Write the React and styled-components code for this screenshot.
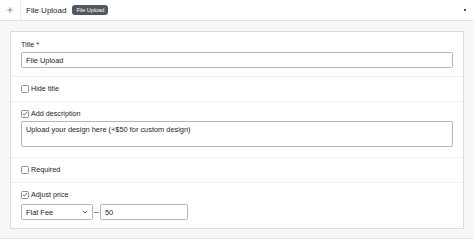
import React from 'react';
import styled, { createGlobalStyle } from 'styled-components';

const Global = createGlobalStyle`
  body {
    margin: 0;
    background: #f6f7f7;
    font-family: "Liberation Sans", Arial, sans-serif;
    color: #1d2327;
  }
`

const Wrap = styled.div`
  width: 474px;
  height: 239px;
  background: #f6f7f7;
  box-sizing: border-box;
  border-bottom: 1px solid #e4e4e4;
`
const Header = styled.header`
  display: flex;
  align-items: center;
  height: 21px;
  background: #fff;
  border-bottom: 1px solid #e2e2e2;
  box-sizing: border-box;
`
const Handle = styled.div`
  width: 20px;
  height: 100%;
  display: flex;
  align-items: center;
  justify-content: center;
  border-right: 1px solid #ececec;
`
const Name = styled.span`
  margin-left: 5px;
  font-size: 8px;
  color: #1d2327;
`
const Badge = styled.span`
  margin-left: 6px;
  background: #50575e;
  color: #fff;
  font-size: 5.5px;
  padding: 2px 4px;
  border-radius: 3px;
`
const Spacer = styled.div`
  flex: 1;
`
const Dot = styled.span`
  width: 2px;
  height: 2px;
  background: #555;
  margin-right: 8px;
`
const Body = styled.div`
  padding: 10px 10px 0 10px;
`
const Panel = styled.div`
  background: #fff;
  border: 1px solid #dcdcde;
`
const Section = styled.div`
  padding: ${p => p.$pad || '7px 10px 8px'};
  border-top: ${p => p.$first ? 'none' : '1px solid #f0f0f1'};
  display: flex;
  flex-direction: column;
  gap: ${p => p.$gap || '3px'};
`
const Label = styled.label`
  font-size: 7.2px;
  line-height: 9px;
  color: #1d2327;
`
const Input = styled.div`
  height: 16px;
  border: 1px solid #b4b6b9;
  border-radius: 2px;
  box-sizing: border-box;
  font-size: 7.4px;
  display: flex;
  align-items: center;
  padding-left: 4px;
  width: ${p => p.$w || 'auto'};
`
const TextArea = styled.div`
  height: 26px;
  border: 1px solid #b4b6b9;
  border-radius: 2px;
  box-sizing: border-box;
  font-size: 7.4px;
  padding: 3px 4px;
`
const CheckRow = styled.div`
  display: flex;
  align-items: center;
  gap: 2px;
  font-size: 7.2px;
  height: 9px;
`
const Box = styled.span`
  width: 8px;
  height: 8px;
  box-sizing: border-box;
  border: 1px solid #8c8f94;
  border-radius: 1.5px;
  display: flex;
  align-items: center;
  justify-content: center;
  background: #fff;
`
const Row = styled.div`
  display: flex;
  align-items: center;
`
const Select = styled(Input)`
  justify-content: space-between;
  padding-right: 4px;
`
const Dash = styled.span`
  width: 5px;
  height: 1px;
  background: #8c8f94;
  margin: 0 1px;
`

const Check = ({ checked, children }) => (
  <CheckRow>
    <Box>
      {checked && (
        <svg width="7" height="7" viewBox="0 0 10 10">
          <path d="M1.5 5.2 L4 7.6 L8.6 2.2" fill="none" stroke="#2271b1" strokeWidth="1.5" />
        </svg>
      )}
    </Box>
    <span>{children}</span>
  </CheckRow>
)

export default function App() {
  return (
    <Wrap>
      <Global />
      <Header>
        <Handle>
          <svg width="6" height="6" viewBox="0 0 10 10">
            <path d="M5 0.5 V9.5 M0.5 5 H9.5" stroke="#777" strokeWidth="1.4" />
          </svg>
        </Handle>
        <Name>File Upload</Name>
        <Badge>File Upload</Badge>
        <Spacer />
        <Dot />
      </Header>
      <Body>
        <Panel>
          <Section $first $pad="8px 10px 8px">
            <Label>Title *</Label>
            <Input>File Upload</Input>
          </Section>
          <Section>
            <Check>Hide title</Check>
          </Section>
          <Section $pad="7px 10px 10px">
            <Check checked>Add description</Check>
            <TextArea>Upload your design here (+$50 for custom design)</TextArea>
          </Section>
          <Section>
            <Check>Required</Check>
          </Section>
          <Section $gap="5px" $pad="7px 10px 8px">
            <Check checked>Adjust price</Check>
            <Row>
              <Select $w="72px">
                <span>Flat Fee</span>
                <svg width="6" height="4" viewBox="0 0 6 4">
                  <path d="M0.8 0.8 L3 3 L5.2 0.8" fill="none" stroke="#50575e" strokeWidth="0.9" />
                </svg>
              </Select>
              <Dash />
              <Input $w="88px">50</Input>
            </Row>
          </Section>
        </Panel>
      </Body>
    </Wrap>
  );
}
